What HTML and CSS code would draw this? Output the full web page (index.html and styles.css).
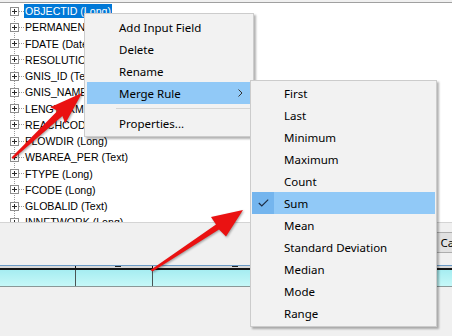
FILE: index.html
```html
<!DOCTYPE html>
<html lang="en">
  <head>
    <meta charset="UTF-8" />
    <title>Field Map - Merge Rule</title>
    <link rel="stylesheet" href="styles.css">
  </head>
  <body>
    <div class="tree">
      <ul class="fields">
        <li class="field"><span class="node"></span><span class="stub"></span><span class="label selected">OBJECTID (Long)</span></li>
        <li class="field"><span class="node"></span><span class="stub"></span><span class="label">PERMANENT_IDENTIFIER (Text)</span></li>
        <li class="field"><span class="node"></span><span class="stub"></span><span class="label">FDATE (Date)</span></li>
        <li class="field"><span class="node"></span><span class="stub"></span><span class="label">RESOLUTION (Long)</span></li>
        <li class="field"><span class="node"></span><span class="stub"></span><span class="label">GNIS_ID (Text)</span></li>
        <li class="field"><span class="node"></span><span class="stub"></span><span class="label">GNIS_NAME (Text)</span></li>
        <li class="field"><span class="node"></span><span class="stub"></span><span class="label">LENGTHKM (Double)</span></li>
        <li class="field"><span class="node"></span><span class="stub"></span><span class="label">REACHCODE (Text)</span></li>
        <li class="field"><span class="node"></span><span class="stub"></span><span class="label">FLOWDIR (Long)</span></li>
        <li class="field"><span class="node"></span><span class="stub"></span><span class="label">WBAREA_PER (Text)</span></li>
        <li class="field"><span class="node"></span><span class="stub"></span><span class="label">FTYPE (Long)</span></li>
        <li class="field"><span class="node"></span><span class="stub"></span><span class="label">FCODE (Long)</span></li>
        <li class="field"><span class="node"></span><span class="stub"></span><span class="label">GLOBALID (Text)</span></li>
        <li class="field"><span class="node"></span><span class="stub"></span><span class="label">INNETWORK (Long)</span></li>
      </ul>
    </div>

    <div class="actions">
      <button class="btn">Cancel</button>
    </div>

    <div class="grid">
      <div class="grid-head">
        <div class="col c1"></div>
        <div class="col c2"></div>
        <div class="col c3"></div>
      </div>
      <div class="grid-row">
        <div class="col c1"></div>
        <div class="col c2"></div>
        <div class="col c3"></div>
      </div>
    </div>

    <!-- context menu -->
    <div class="menu context">
      <div class="item">Add Input Field</div>
      <div class="item">Delete</div>
      <div class="item">Rename</div>
      <div class="item active">Merge Rule
        <svg class="chevron" width="5" height="8" viewBox="0 0 5 8"><polyline points="0.5,0.5 4,4 0.5,7.5" fill="none" stroke="#333" stroke-width="1"/></svg>
      </div>
      <div class="sep"></div>
      <div class="item">Properties...</div>
    </div>

    <div class="menu submenu">
      <div class="item">First</div>
      <div class="item">Last</div>
      <div class="item">Minimum</div>
      <div class="item">Maximum</div>
      <div class="item">Count</div>
      <div class="item active checked">
        <span class="mark"><svg width="11" height="8" viewBox="0 0 11 8"><polyline points="0.8,4 3.8,7 10.2,0.6" fill="none" stroke="#1c2c44" stroke-width="1.2"/></svg></span>Sum
      </div>
      <div class="item">Mean</div>
      <div class="item">Standard Deviation</div>
      <div class="item">Median</div>
      <div class="item">Mode</div>
      <div class="item">Range</div>
    </div>

    <!-- callout arrows -->
    <svg class="arrows" width="452" height="336" viewBox="0 0 452 336">
      <polygon points="11.5,157.5 57.6,110.8 50.3,107.3 82,93 65.3,123.5 62.4,116 13,159" fill="#ea1212"/>
      <polygon points="150.5,270 216,224.5 211,217 243,210 226,236.5 219,229.5 152.5,271.5" fill="#ea1212"/>
    </svg>
  </body>
</html>
```

FILE: styles.css
```css
body {
  margin: 0;
  width: 452px;
  height: 336px;
  overflow: hidden;
  position: relative;
  background: #f0f0f0;
  font-family: "Liberation Sans", Arial, sans-serif;
  color: #000;
}
.tree {
  margin-top: 2px;
  height: 219px;
  overflow: hidden;
  background: #fff;
  border-top: 1px solid #a0a0a0;
  border-bottom: 1px solid #d4d4d4;
}
.fields {
  list-style: none;
  margin: 0;
  padding: 0;
  background-image: repeating-linear-gradient(to bottom, #9a9a9a 0 1px, transparent 1px 2px);
  background-size: 1px 100%;
  background-position: 14px 8px;
  background-repeat: no-repeat;
}
.field {
  display: flex;
  align-items: center;
  height: 16.25px;
  font-size: 10.6px;
  white-space: nowrap;
}
.node {
  flex: none;
  width: 7px;
  height: 7px;
  margin-left: 10px;
  border: 1px solid #8e8e8e;
  background:
    linear-gradient(#2b2b2b, #2b2b2b) center / 5px 1px no-repeat,
    linear-gradient(#2b2b2b, #2b2b2b) center / 1px 5px no-repeat,
    #fff;
}
.stub {
  flex: none;
  width: 5px;
  height: 1px;
  background: repeating-linear-gradient(to right, #9a9a9a 0 1px, transparent 1px 2px);
}
.label {
  padding: 0 1px;
  line-height: 14px;
}
.label.selected {
  background: #0078d7;
  color: #fff;
}
.actions {
  display: flex;
  margin-top: 9px;
}
.btn {
  flex: none;
  margin-left: 421px;
  width: 75px;
  height: 21px;
  padding: 0;
  border: 1px solid #adadad;
  background: #e1e1e1;
  font-family: "Noto Sans", sans-serif;
  font-size: 11.5px;
  color: #000;
}
.grid {
  margin-top: 12px;
  border-top: 1px solid #6b9bc7;
  border-bottom: 1px solid #8a9898;
}
.grid-head,
.grid-row {
  display: flex;
}
.grid-head {
  height: 2px;
  background: #d9d9d9;
  border-bottom: 2px solid #151515;
}
.grid-row {
  height: 16px;
  background: linear-gradient(#a6edf1, #c6f8f8);
}
.col {
  flex: none;
  border-right: 1px solid #4a5555;
}
.c1 { width: 75px; }
.c2 { width: 76px; }
.c3 { flex: 1; border-right: none; }
.grid-head .col { border-right-color: #111; }
.grid-head .c2 {
  background: linear-gradient(#222, #222) 39px 0 / 6px 1px no-repeat;
}
.grid-head .c3 {
  background: linear-gradient(#222, #222) 79px 0 / 6px 1px no-repeat;
}
.menu {
  position: absolute;
  background: #f2f2f2;
  border: 1px solid #cccccc;
  box-shadow: 2px 2px 2px rgba(0, 0, 0, 0.3);
  font-family: "Noto Sans", sans-serif;
  font-size: 11.5px;
}
.context {
  left: 84px;
  top: 13px;
  width: 163px;
  padding: 2px 3px 2px 2px;
}
.submenu {
  left: 250px;
  top: 80px;
  width: 183px;
  padding: 1px 1px 2px 1px;
}
.item {
  display: flex;
  align-items: center;
  height: 22px;
  padding-left: 32px;
}
.item.active {
  background: #91c9f7;
}
.item.checked {
  padding-left: 0;
}
.mark {
  flex: none;
  align-self: stretch;
  width: 22px;
  margin-right: 10px;
  display: flex;
  align-items: center;
  justify-content: center;
  background: #74b5ee;
}
.chevron {
  margin-left: auto;
  margin-right: 7px;
}
.sep {
  height: 1px;
  margin: 4px 0 3px 29px;
  background: #d5d5d5;
}
.arrows {
  position: absolute;
  left: 0;
  top: 0;
  pointer-events: none;
  filter: drop-shadow(1px 1px 1px rgba(0, 0, 0, 0.35));
}
```
